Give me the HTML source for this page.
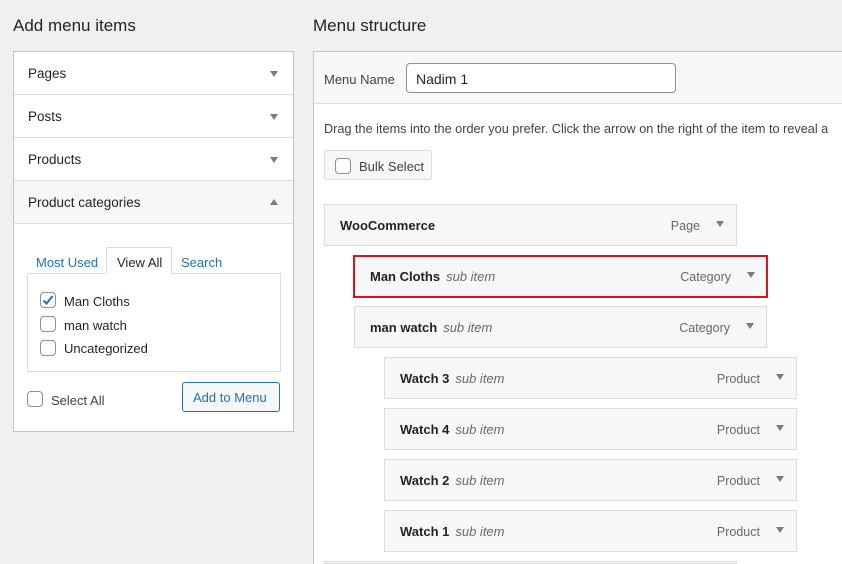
<!DOCTYPE html>
<html style="width:842px;height:564px;overflow:hidden"><head><meta charset="utf-8"><style>
*{box-sizing:border-box;margin:0;padding:0}
body{width:842px;height:564px;background:#f0f0f1;font-family:"Liberation Sans",sans-serif;font-size:13px;color:#1d2327;position:relative;overflow:hidden}
.a{position:absolute}
h2{position:absolute;font-size:17px;font-weight:normal;color:#1d2327}
.lp{left:13px;top:51px;width:281px;height:381px;background:#fff;border:1px solid #c3c4c7}
.row{position:absolute;left:0;width:279px;height:43px;border-bottom:1px solid #dcdcde;font-size:13.5px;padding:14px 0 0 14px}
.tri{position:absolute;width:0;height:0;border-left:4px solid transparent;border-right:4px solid transparent;border-top:6px solid #787c82}
.up{border-top:0;border-bottom:6px solid #787c82}
.cb{position:absolute;width:16px;height:16px;border:1px solid #8c8f94;border-radius:4px;background:#fff}
.it{position:absolute;width:413px;height:42px;background:#f6f7f7;border:1px solid #dcdcde}
.it b{position:absolute;left:15px;top:13px;font-size:13px;font-weight:600}
.it i{color:#646970;font-weight:normal;margin-left:6px}
.it .t{position:absolute;right:36px;top:14px;color:#646970;font-size:12.5px}
.it .tri{right:12px;top:16px}
</style></head><body>
<h2 style="left:13px;top:16px">Add menu items</h2>
<h2 style="left:313px;top:16px">Menu structure</h2>
<div class="a lp">
 <div class="row" style="top:0">Pages<div class="tri" style="right:15px;top:19px"></div></div>
 <div class="row" style="top:43px">Posts<div class="tri" style="right:15px;top:19px"></div></div>
 <div class="row" style="top:86px">Products<div class="tri" style="right:15px;top:19px"></div></div>
 <div class="row" style="top:129px;background:#f6f7f7">Product categories<div class="tri up" style="right:15px;top:18px"></div></div>
 <div class="a" style="left:22px;top:203px;color:#2271b1">Most Used</div>
 <div class="a" style="left:92px;top:195px;width:66px;height:27px;border:1px solid #dcdcde;border-bottom:1px solid #fff;background:#fff;padding:7px 0 0 10px;z-index:2">View All</div>
 <div class="a" style="left:167px;top:203px;color:#2271b1">Search</div>
 <div class="a" style="left:13px;top:221px;width:254px;height:99px;border:1px solid #dcdcde"></div>
 <div class="cb" style="left:26px;top:240px"><svg width="14" height="14" style="position:absolute;left:0;top:0"><path d="M2.5 7.5l3 3 6-7.5" stroke="#2271b1" stroke-width="2" fill="none"/></svg></div>
 <div class="a" style="left:50px;top:242px">Man Cloths</div>
 <div class="cb" style="left:26px;top:264px"></div><div class="a" style="left:50px;top:266px">man watch</div>
 <div class="cb" style="left:26px;top:288px"></div><div class="a" style="left:50px;top:289px">Uncategorized</div>
 <div class="cb" style="left:13px;top:339px"></div><div class="a" style="left:37px;top:341px;color:#3c434a">Select All</div>
 <div class="a" style="left:168px;top:330px;width:98px;height:30px;border:1px solid #2271b1;border-radius:3px;background:#f6f7f7;color:#2271b1;padding:7px 0 0 10px">Add to Menu</div>
</div>
<div class="a" style="left:313px;top:51px;width:540px;height:520px;background:#fff;border:1px solid #c3c4c7">
 <div class="a" style="left:0;top:0;width:540px;height:52px;background:#f6f7f7;border-bottom:1px solid #dcdcde"></div>
 <div class="a" style="left:10px;top:20px;color:#3c434a">Menu Name</div>
 <div class="a" style="left:92px;top:11px;width:270px;height:30px;border:1px solid #8c8f94;border-radius:4px;background:#fff;padding:7px 0 0 9px;font-size:14px">Nadim 1</div>
 <div class="a" style="left:10px;top:70px;color:#3c434a;white-space:nowrap;font-size:12.7px">Drag the items into the order you prefer. Click the arrow on the right of the item to reveal a</div>
 <div class="a" style="left:10px;top:98px;width:108px;height:30px;border:1px solid #dcdcde;border-radius:3px;background:#f6f7f7"></div>
 <div class="cb" style="left:21px;top:106px"></div>
 <div class="a" style="left:45px;top:107px;color:#3c434a">Bulk Select</div>
</div>
<div class="it" style="left:324px;top:204px"><b>WooCommerce</b><span class="t">Page</span><div class="tri"></div></div>
<div class="it" style="left:353px;top:255px;border:2px solid #e0101a;width:415px;height:43px"><b style="left:15px;top:12px">Man Cloths<i>sub item</i></b><span class="t" style="right:35px;top:13px">Category</span><div class="tri" style="right:11px;top:15px"></div></div>
<div class="it" style="left:354px;top:306px"><b>man watch<i>sub item</i></b><span class="t">Category</span><div class="tri"></div></div>
<div class="it" style="left:384px;top:357px"><b>Watch 3<i>sub item</i></b><span class="t">Product</span><div class="tri"></div></div>
<div class="it" style="left:384px;top:408px"><b>Watch 4<i>sub item</i></b><span class="t">Product</span><div class="tri"></div></div>
<div class="it" style="left:384px;top:459px"><b>Watch 2<i>sub item</i></b><span class="t">Product</span><div class="tri"></div></div>
<div class="it" style="left:384px;top:510px"><b>Watch 1<i>sub item</i></b><span class="t">Product</span><div class="tri"></div></div>
<div class="it" style="left:324px;top:561px;height:3px"></div>
</body></html>
